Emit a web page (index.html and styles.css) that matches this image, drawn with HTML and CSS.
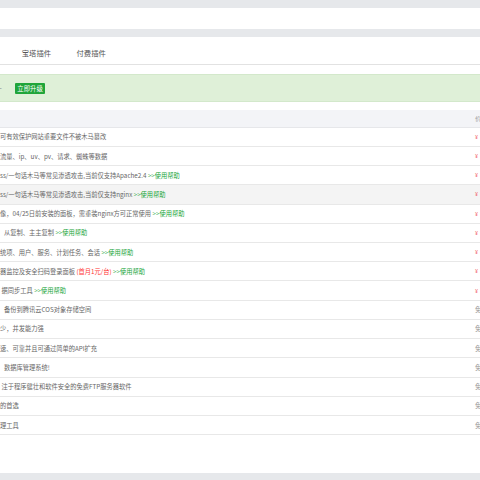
FILE: index.html
```html
<!DOCTYPE html>
<html lang="zh-CN">
<head>
<meta charset="utf-8">
<title>软件管理</title>
<link rel="stylesheet" href="styles.css">
</head>
<body>
<div class="page">
  <div class="crumb"></div>
  <div class="main">
    <div class="tabs">
      <span class="tab">宝塔插件</span>
      <span class="tab">付费插件</span>
    </div>
    <div class="notice">
      <span class="cut">一</span>
      <span class="badge">立即升级</span>
    </div>
    <div class="table">
      <div class="row head"><span class="desc"></span><span class="price">价格</span></div>
      <div class="row"><span class="desc">可有效保护网站重要文件不被木马篡改</span><span class="price pay">¥</span></div>
      <div class="row"><span class="desc">流量、ip、uv、pv、请求、蜘蛛等数据</span><span class="price pay">¥</span></div>
      <div class="row"><span class="desc">ss/一句话木马等常见渗透攻击,当前仅支持Apache2.4 <a class="help">&gt;&gt;使用帮助</a></span><span class="price pay">¥</span></div>
      <div class="row hover"><span class="desc">ss/一句话木马等常见渗透攻击,当前仅支持nginx <a class="help">&gt;&gt;使用帮助</a></span><span class="price pay">¥</span></div>
      <div class="row"><span class="desc">像，04/25日前安装的面板，需重装nginx方可正常使用 <a class="help">&gt;&gt;使用帮助</a></span><span class="price pay">¥</span></div>
      <div class="row"><span class="desc in4">从复制、主主复制 <a class="help">&gt;&gt;使用帮助</a></span><span class="price pay">¥</span></div>
      <div class="row"><span class="desc">统项、用户、服务、计划任务、会话 <a class="help">&gt;&gt;使用帮助</a></span><span class="price pay">¥</span></div>
      <div class="row"><span class="desc">器监控及安全扫码登录面板 <span class="red">(首月1元/台)</span> <a class="help">&gt;&gt;使用帮助</a></span><span class="price pay">¥</span></div>
      <div class="row"><span class="desc in1">据同步工具 <a class="help">&gt;&gt;使用帮助</a></span><span class="price pay">¥</span></div>
      <div class="row"><span class="desc in4">备份到腾讯云COS对象存储空间</span><span class="price free">免费</span></div>
      <div class="row"><span class="desc">少，并发能力强</span><span class="price free">免费</span></div>
      <div class="row"><span class="desc">速、可靠并且可通过简单的API扩充</span><span class="price free">免费</span></div>
      <div class="row"><span class="desc in4">数据库管理系统!</span><span class="price free">免费</span></div>
      <div class="row"><span class="desc in1">注于程序健壮和软件安全的免费FTP服务器软件</span><span class="price free">免费</span></div>
      <div class="row"><span class="desc">的首选</span><span class="price free">免费</span></div>
      <div class="row"><span class="desc">理工具</span><span class="price free">免费</span></div>
    </div>
  </div>
</div>
</body>
</html>
```

FILE: styles.css
```css
html, body {
  margin: 0;
  padding: 0;
  height: 480px;
  overflow: hidden;
  background: #e6e8eb;
  font-family: "Noto Sans CJK SC", "Liberation Sans", sans-serif;
  color: #666;
}

.page {
  display: flex;
  flex-direction: column;
  gap: 7.7px;
  padding-top: 7.5px;
}

.crumb {
  height: 21.5px;
  background: #fff;
}

.main {
  height: 436px;
  background: #fff;
  display: flex;
  flex-direction: column;
}

.tabs {
  height: 28.5px;
  flex: none;
  box-sizing: border-box;
  padding: 4px 0 0 21.7px;
  display: flex;
  align-items: center;
  gap: 25.4px;
  border-bottom: 1px solid #e2e2e2;
}

.tab {
  font-size: 7.35px;
  color: #555;
  white-space: nowrap;
}

.notice {
  margin-top: 9px;
  height: 27.7px;
  flex: none;
  box-sizing: border-box;
  background: #dff0d8;
  border-top: 1px solid #d3e8cb;
  border-bottom: 1px solid #d3e8cb;
  display: flex;
  align-items: center;
  font-size: 6.25px;
}

.cut {
  margin-left: -4.5px;
  color: #888;
  font-size: 6.25px;
}

.badge {
  margin-left: 13.3px;
  height: 11px;
  line-height: 11px;
  padding: 0 2.3px;
  background: #20a53a;
  color: #fff;
  font-size: 6.4px;
  border-radius: 1px;
}

.table {
  margin-top: 8.5px;
  display: flex;
  flex-direction: column;
}

.row {
  height: 19.23px;
  flex: none;
  box-sizing: border-box;
  border-bottom: 1px solid #e8e8e8;
  display: flex;
  align-items: center;
  overflow: hidden;
  font-size: 6.25px;
  white-space: nowrap;
}

.row.head {
  height: 17.3px;
  background: #f3f4f7;
  border-bottom: 1px solid #e6e7ea;
  color: #999;
}

.row.hover {
  background: #f4f4f4;
}

.desc {
  flex: 1;
  min-width: 0;
}

.desc.in1 {
  padding-left: 1.5px;
}

.desc.in4 {
  padding-left: 4px;
}

.price {
  width: 5px;
  flex: none;
}

.pay {
  color: #f0555a;
  font-size: 5.5px;
}

.free {
  color: #999;
  padding-left: 1px;
}

.help {
  color: #20a53a;
}

.red {
  color: #f33;
}
```
